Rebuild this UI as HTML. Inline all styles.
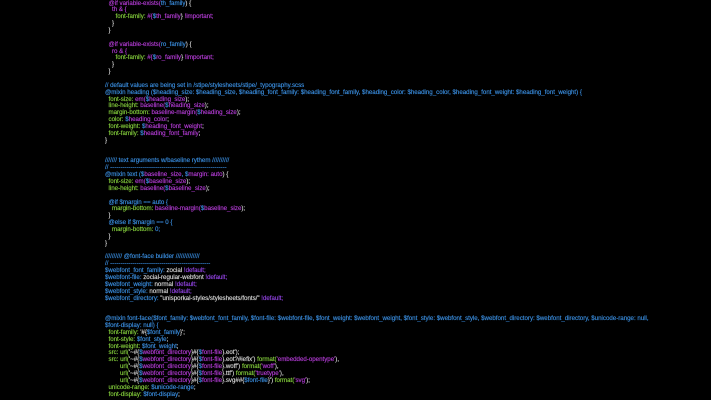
<!DOCTYPE html>
<html><head><meta charset="utf-8"><style>
html,body{margin:0;padding:0;background:#000;width:711px;height:400px;overflow:hidden}
#c{position:absolute;left:105px;top:0.6px;font-family:"Liberation Sans",sans-serif;font-size:6.15px;line-height:6.86px;color:#d8d8d8;-webkit-text-stroke:0.15px currentColor}
#c div{height:6.86px;white-space:pre}
.b{color:#3a8ee0}.g{color:#84cf3c}.m{color:#b43cd6}.p{color:#9444e6}.w{color:#d8d8d8}
.i1{padding-left:3.5px}.i2{padding-left:7px}.i3{padding-left:10.5px}.i4{padding-left:15px}
</style></head><body><div id="c">
<div class="i1"><span class="m">@if variable-exists(</span><span class="b">th_family</span><span class="w">) {</span></div>
<div class="i2"><span class="m">th &amp; {</span></div>
<div class="i3"><span class="g">font-family: </span><span class="m">#{</span><span class="b">$</span><span class="m">th_family</span><span class="w">} </span><span class="m">!important;</span></div>
<div class="i2">}</div>
<div class="i1">}</div>
<div></div>
<div class="i1"><span class="m">@if variable-exists(</span><span class="b">ro_family</span><span class="w">) {</span></div>
<div class="i2"><span class="m">ro &amp; {</span></div>
<div class="i3"><span class="g">font-family: </span><span class="m">#{</span><span class="b">$</span><span class="m">ro_family</span><span class="w">} </span><span class="m">!important;</span></div>
<div class="i2">}</div>
<div class="i1">}</div>
<div></div>
<div class="b">// default values are being set in /stipe/stylesheets/stipe/_typography.scss</div>
<div class="b"><span>@mixin heading ($heading_size: $heading_size, $heading_font_family: $heading_font_family, $heading_color: $heading_color, $heading_font_weight: $heading_font_weight) {</span></div>
<div class="i1"><span class="g">font-size: </span><span class="m">em(</span><span class="b">$</span><span class="m">heading_size</span><span class="w">);</span></div>
<div class="i1"><span class="g">line-height: </span><span class="m">baseline(</span><span class="b">$</span><span class="m">heading_size</span><span class="w">);</span></div>
<div class="i1"><span class="g">margin-bottom: </span><span class="m">baseline-margin(</span><span class="b">$</span><span class="m">heading_size</span><span class="w">);</span></div>
<div class="i1"><span class="g">color: </span><span class="b">$</span><span class="m">heading_color</span><span class="w">;</span></div>
<div class="i1"><span class="g">font-weight: </span><span class="b">$</span><span class="m">heading_font_weight</span><span class="w">;</span></div>
<div class="i1"><span class="g">font-family: </span><span class="b">$</span><span class="m">heading_font_family</span><span class="w">;</span></div>
<div>}</div>
<div></div>
<div></div>
<div class="b">/////// text arguments w/baseline rythem //////////</div>
<div class="b">// ---------------------------------------------------------</div>
<div><span class="b">@mixin text (</span><span class="b">$</span><span class="m">baseline_size</span><span class="b">, $</span><span class="m">margin: auto</span><span class="w">) {</span></div>
<div class="i1"><span class="g">font-size: </span><span class="m">em(</span><span class="b">$</span><span class="m">baseline_size</span><span class="w">);</span></div>
<div class="i1"><span class="g">line-height: </span><span class="m">baseline(</span><span class="b">$</span><span class="m">baseline_size</span><span class="w">);</span></div>
<div></div>
<div class="i1"><span class="b">@if $margin == auto {</span></div>
<div class="i2"><span class="g">margin-bottom: </span><span class="m">baseline-margin(</span><span class="b">$</span><span class="m">baseline_size</span><span class="w">);</span></div>
<div class="i1">}</div>
<div class="i1"><span class="b">@else if $margin == 0 {</span></div>
<div class="i2"><span class="g">margin-bottom: </span><span class="b">0;</span></div>
<div class="i1">}</div>
<div>}</div>
<div></div>
<div class="b">////////// @font-face builder //////////////</div>
<div class="b">// -------------------------------------------------</div>
<div><span class="b">$webfont_font_family: </span><span class="w">zocial </span><span class="p">!default;</span></div>
<div><span class="b">$webfont-file: </span><span class="w">zocial-regular-webfont </span><span class="p">!default;</span></div>
<div><span class="b">$webfont_weight: </span><span class="w">normal </span><span class="p">!default;</span></div>
<div><span class="b">$webfont_style: </span><span class="w">normal </span><span class="p">!default;</span></div>
<div><span class="b">$webfont_directory: </span><span class="w">"unisporkal-styles/stylesheets/fonts/" </span><span class="p">!default;</span></div>
<div></div>
<div></div>
<div class="b">@mixin font-face($font_family: $webfont_font_family, $font-file: $webfont-file, $font_weight: $webfont_weight, $font_style: $webfont_style, $webfont_directory: $webfont_directory, $unicode-range: null,</div>
<div class="b">$font-display: null) {</div>
<div class="i1"><span class="g">font-family: </span><span class="w">'#{</span><span class="b">$font_family</span><span class="w">}';</span></div>
<div class="i1"><span class="g">font-style: </span><span class="b">$font_style</span><span class="w">;</span></div>
<div class="i1"><span class="g">font-weight: </span><span class="b">$font_weight</span><span class="w">;</span></div>
<div class="i1"><span class="g">src: url(</span><span class="w">'~#{</span><span class="b">$</span><span class="m">webfont_directory</span><span class="w">}#{</span><span class="b">$</span><span class="m">font-file</span><span class="w">}.eot');</span></div>
<div class="i1"><span class="g">src: url(</span><span class="w">'~#{</span><span class="b">$</span><span class="m">webfont_directory</span><span class="w">}#{</span><span class="b">$</span><span class="m">font-file</span><span class="w">}.eot?#iefix') </span><span class="g">format(</span><span class="m">'embedded-opentype'</span><span class="w">),</span></div>
<div class="i4"><span class="g">url(</span><span class="w">'~#{</span><span class="b">$</span><span class="m">webfont_directory</span><span class="w">}#{</span><span class="b">$</span><span class="m">font-file</span><span class="w">}.woff') </span><span class="g">format(</span><span class="m">'woff'</span><span class="w">),</span></div>
<div class="i4"><span class="g">url(</span><span class="w">'~#{</span><span class="b">$</span><span class="m">webfont_directory</span><span class="w">}#{</span><span class="b">$</span><span class="m">font-file</span><span class="w">}.ttf') </span><span class="g">format(</span><span class="m">'truetype'</span><span class="w">),</span></div>
<div class="i4"><span class="g">url(</span><span class="w">'~#{</span><span class="b">$</span><span class="m">webfont_directory</span><span class="w">}#{</span><span class="b">$</span><span class="m">font-file</span><span class="w">}.svg##{</span><span class="b">$font-file</span><span class="w">}') </span><span class="g">format(</span><span class="m">'svg'</span><span class="w">);</span></div>
<div class="i1"><span class="g">unicode-range: </span><span class="b">$unicode-range</span><span class="w">;</span></div>
<div class="i1"><span class="g">font-display: </span><span class="b">$font-display</span><span class="w">;</span></div>
</div></body></html>
